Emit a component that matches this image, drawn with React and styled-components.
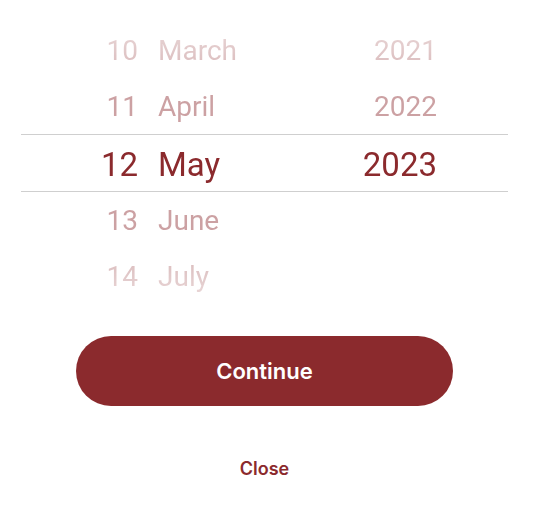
import React from 'react';
import styled, {createGlobalStyle} from 'styled-components';

const GlobalStyle = createGlobalStyle`
    html, body {
        margin: 0;
        padding: 0;
        background: #fff;
    }
    body {
        width: 534px;
        height: 530px;
        overflow: hidden;
    }
`;

const Sheet = styled.div`
    width: 487px;
    padding: 22px 0 0 21px;
    display: flex;
    flex-direction: column;
`;

const Wheel = styled.div`
    display: flex;
    flex-direction: column;
    -webkit-mask-image: linear-gradient(to bottom, rgba(0,0,0,0.45) 0px, #000 60px, #000 calc(100% - 60px), rgba(0,0,0,0.45) 100%);
    mask-image: linear-gradient(to bottom, rgba(0,0,0,0.45) 0px, #000 60px, #000 calc(100% - 60px), rgba(0,0,0,0.45) 100%);
`;

const Row = styled.div`
    display: grid;
    grid-template-columns: 117px 182px 77px;
    column-gap: 20px;
    align-items: center;
    height: ${p => p.$selected ? '54px' : '56px'};
    padding-top: ${p => p.$selected ? '2px' : '0'};
    border-top: ${p => p.$selected ? '1px solid #cfcfcf' : 'none'};
    border-bottom: ${p => p.$selected ? '1px solid #cfcfcf' : 'none'};
    font-family: Roboto, "Liberation Sans", sans-serif;
    font-weight: 400;
    font-size: ${p => p.$selected ? '33px' : '28px'};
    color: ${p => p.$selected ? '#8b2a2d' : `rgba(139, 42, 45, ${p.$fade})`};
`;

const Day = styled.span`
    text-align: right;
`;

const Month = styled.span`
    text-align: left;
`;

const Year = styled.span`
    text-align: right;
`;

const PrimaryButton = styled.button`
    margin: 32px 55px 0;
    height: 70px;
    border: none;
    border-radius: 35px;
    background: #8b2a2d;
    color: #fff;
    font-family: Inter, "Noto Sans", sans-serif;
    font-weight: 600;
    font-size: 22px;
    cursor: pointer;
`;

const TextButton = styled.button`
    margin: 38px auto 0;
    height: 48px;
    padding: 0 20px;
    border: none;
    background: none;
    color: #8b2a2d;
    font-family: Inter, "Noto Sans", sans-serif;
    font-weight: 600;
    font-size: 18px;
    cursor: pointer;
`;

const rows = [
    {day: 10, month: 'March', year: 2021, fade: 0.36},
    {day: 11, month: 'April', year: 2022, fade: 0.44},
    {day: 12, month: 'May', year: 2023, selected: true},
    {day: 13, month: 'June', year: null, fade: 0.44},
    {day: 14, month: 'July', year: null, fade: 0.36},
];

export default function App() {
    return (<>
        <GlobalStyle />
        <Sheet>
            <Wheel>
                {rows.map((r) => (
                    <Row key={r.day} $selected={r.selected} $fade={r.fade}>
                        <Day>{r.day}</Day>
                        <Month>{r.month}</Month>
                        <Year>{r.year}</Year>
                    </Row>
                ))}
            </Wheel>
            <PrimaryButton>Continue</PrimaryButton>
            <TextButton>Close</TextButton>
        </Sheet>
    </>);
}
